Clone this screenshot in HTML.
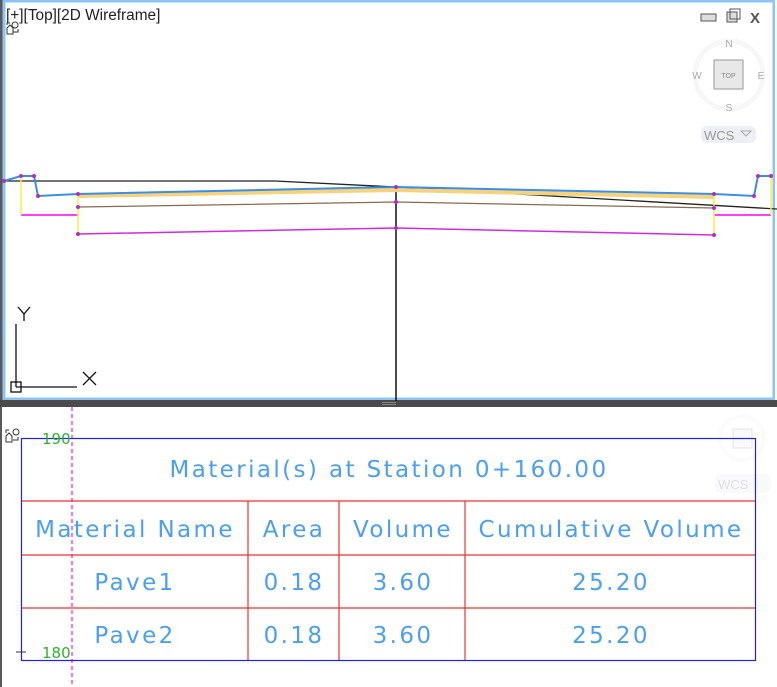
<!DOCTYPE html>
<html><head><style>
html,body{margin:0;padding:0;background:#fff;}
body{width:777px;height:687px;overflow:hidden;position:relative;font-family:"Liberation Sans",sans-serif;}
svg{position:absolute;left:0;top:0;}
.t{font-family:"DejaVu Sans","Liberation Sans",sans-serif;fill:#4a9ff5;font-size:23px;letter-spacing:2.4px;}
</style></head><body>
<svg width="777" height="687" viewBox="0 0 777 687" xmlns="http://www.w3.org/2000/svg">
<rect x="0" y="0" width="777" height="687" fill="#fff"/>
<rect x="0" y="0" width="3" height="401" fill="#5a5a5a"/>
<rect x="4" y="1" width="770" height="398" fill="none" stroke="#8dc4f7" stroke-width="3"/>
<rect x="775" y="0" width="2" height="401" fill="#fff"/>
<rect x="0" y="400" width="777" height="7" fill="#4a4a4a"/>
<rect x="382" y="402" width="14" height="1" fill="#888"/>
<rect x="382" y="404" width="14" height="1" fill="#888"/>
<rect x="0" y="407" width="2" height="280" fill="#5a5a5a"/>
<text x="6" y="20" font-family="Liberation Sans,sans-serif" font-size="15.4" fill="#222">[+][Top][2D Wireframe]</text>
<g fill="none" stroke="#333" stroke-width="1">
<path d="M7 34 L7 28 L10 25 L13 28 L13 34 Z"/><path d="M7 25 v-2 h3"/><circle cx="15" cy="25" r="3"/><path d="M13 32 h5 v-3"/>
</g>
<rect x="701" y="14" width="15" height="7" fill="#ddd" stroke="#555"/>
<rect x="727" y="12" width="10" height="10" fill="#ddd" stroke="#555"/><rect x="730" y="9" width="10" height="10" fill="none" stroke="#555"/>
<text x="750" y="23" font-size="15" font-weight="bold" fill="#555">X</text>
<circle cx="729" cy="75" r="34" fill="none" stroke="#f7f7f7" stroke-width="5"/>
<rect x="714" y="60" width="29" height="29" fill="#e8e8e8" stroke="#999"/>
<text x="728.5" y="78" font-size="7" fill="#888" text-anchor="middle">TOP</text>
<text x="729" y="47" font-size="10" fill="#aaa" text-anchor="middle">N</text>
<text x="729" y="111" font-size="10" fill="#aaa" text-anchor="middle">S</text>
<text x="697" y="79" font-size="10" fill="#aaa" text-anchor="middle">W</text>
<text x="761" y="79" font-size="10" fill="#aaa" text-anchor="middle">E</text>
<rect x="701" y="126" width="55" height="17" rx="6" fill="#eeeef5"/>
<text x="704" y="140" font-size="13" fill="#999">WCS</text>
<path d="M741 131 l10 0 l-5 5 z" fill="none" stroke="#aaa"/>
<polyline points="6,181 275,181 396,187 777,209" fill="none" stroke="#222" stroke-width="1.3"/>
<line x1="396" y1="187" x2="396" y2="401" stroke="#111" stroke-width="1.5"/>
<polyline points="78,196 396,190 714,197" fill="none" stroke="#f7d27a" stroke-width="4"/>
<polyline points="78,207 396,202 714,208" fill="none" stroke="#8a6a50" stroke-width="1.2"/>
<polyline points="78,234 396,228 714,235" fill="none" stroke="#d02be0" stroke-width="1.5"/>
<polyline points="21,215 78,215" fill="none" stroke="#f0f" stroke-width="1.5"/>
<polyline points="714,215 771,215" fill="none" stroke="#f0f" stroke-width="1.5"/>
<g stroke="#f5f040" stroke-width="1.5"><line x1="21" y1="176" x2="21" y2="215"/><line x1="78" y1="194" x2="78" y2="234"/><line x1="714" y1="194" x2="714" y2="235"/><line x1="771" y1="176" x2="771" y2="215"/></g>
<polyline points="4,181 21,176 34,176 38,196 78,194 396,187 714,194 754,196 758,176 771,176" fill="none" stroke="#3a8ee8" stroke-width="2"/>
<g fill="#b030c0"><circle cx="4" cy="181" r="2"/><circle cx="21" cy="176" r="2"/><circle cx="34" cy="176" r="2"/><circle cx="38" cy="196" r="2"/><circle cx="78" cy="194" r="2"/><circle cx="78" cy="207" r="2"/><circle cx="78" cy="234" r="2"/><circle cx="396" cy="187" r="2"/><circle cx="396" cy="202" r="2"/><circle cx="396" cy="228" r="2"/><circle cx="714" cy="194" r="2"/><circle cx="714" cy="208" r="2"/><circle cx="714" cy="235" r="2"/><circle cx="754" cy="196" r="2"/><circle cx="758" cy="176" r="2"/><circle cx="771" cy="176" r="2"/></g>
<g stroke="#111" stroke-width="1.3" fill="none">
<line x1="16" y1="324" x2="16" y2="387"/><line x1="16" y1="387" x2="77" y2="387"/><rect x="11" y="382" width="10" height="10"/>
<path d="M18 307 l6 7 l6 -7 M24 314 v7"/>
<path d="M83 372 l13 13 M96 372 l-13 13"/>
</g>
<g opacity="0.3">
<circle cx="742" cy="438" r="22" fill="none" stroke="#f2f2f2" stroke-width="4"/>
<rect x="733" y="429" width="19" height="19" fill="#eee" stroke="#aaa"/>
<rect x="715" y="474" width="56" height="19" rx="6" fill="#eeeef5"/>
<text x="718" y="489" font-size="13" fill="#999">WCS</text>
</g>
<g fill="none" stroke="#333" stroke-width="1">
<path d="M6 442 L6 436 L9 433 L12 436 L12 442 Z"/><path d="M6 433 v-3 h3"/><circle cx="16" cy="432" r="3"/><path d="M13 440 h5 v-3"/>
</g>
<line x1="72" y1="407" x2="72" y2="687" stroke="#ff44ff" stroke-width="1.5" stroke-dasharray="4,3"/>
<rect x="21.5" y="438.5" width="734" height="222" fill="none" stroke="#2020f0" stroke-width="1.2"/>
<g stroke="#f03030" stroke-width="1.2">
<line x1="22" y1="501" x2="755" y2="501"/><line x1="22" y1="555" x2="755" y2="555"/><line x1="22" y1="608" x2="755" y2="608"/>
<line x1="248" y1="501" x2="248" y2="660"/><line x1="339" y1="501" x2="339" y2="660"/><line x1="465" y1="501" x2="465" y2="660"/>
</g>
<line x1="16" y1="652" x2="26" y2="652" stroke="#333"/>
<text x="42" y="444" font-size="15" fill="#2ab52a" font-family="DejaVu Sans,sans-serif">190</text>
<text x="42" y="658" font-size="15" fill="#2ab52a" font-family="DejaVu Sans,sans-serif">180</text>
<text class="t" x="389" y="477" text-anchor="middle">Material(s) at Station 0+160.00</text>
<text class="t" x="135" y="537" text-anchor="middle">Material Name</text>
<text class="t" x="294" y="537" text-anchor="middle">Area</text>
<text class="t" x="403" y="537" text-anchor="middle">Volume</text>
<text class="t" x="611" y="537" text-anchor="middle">Cumulative Volume</text>
<text class="t" x="135" y="590" text-anchor="middle">Pave1</text>
<text class="t" x="294" y="590" text-anchor="middle">0.18</text>
<text class="t" x="403" y="590" text-anchor="middle">3.60</text>
<text class="t" x="611" y="590" text-anchor="middle">25.20</text>
<text class="t" x="135" y="643" text-anchor="middle">Pave2</text>
<text class="t" x="294" y="643" text-anchor="middle">0.18</text>
<text class="t" x="403" y="643" text-anchor="middle">3.60</text>
<text class="t" x="611" y="643" text-anchor="middle">25.20</text>
</svg>
</body></html>
